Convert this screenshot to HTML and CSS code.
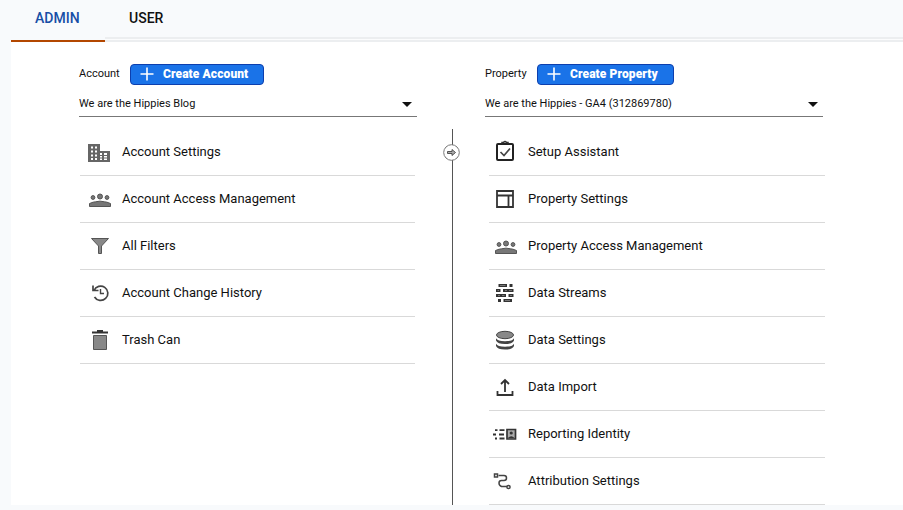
FILE: index.html
```
<!DOCTYPE html>
<html lang="en">
<head>
    <meta charset="UTF-8">
    <meta name="viewport" content="width=device-width, initial-scale=1.0">
    <title>Admin</title>
    <link rel="stylesheet" href="styles.css">
</head>
<body>
    <nav class="tabs">
        <a class="tab active">ADMIN</a>
        <a class="tab">USER</a>
    </nav>

    <main class="panel">
        <section class="column account">
            <div class="column-head">
                <span class="label">Account</span>
                <button class="create"><svg width="14" height="14" viewBox="0 0 14 14"><path d="M7 .5v13M.5 7h13" stroke="#fff" stroke-width="1.6"/></svg><span>Create Account</span></button>
            </div>
            <div class="select"><span>We are the Hippies Blog</span><i class="caret"></i></div>
            <ul class="menu">
                <li>
                    <svg class="icon" viewBox="0 0 24 24"><path d="M0 4h12v7h10v11H0z" fill="#666"/><path d="M3 6.500h2v2H3zM7 6.500h2v2H7zM3 10.500h2v2H3zM7 10.500h2v2H7zM3 14.500h2v2H3zM7 14.500h2v2H7zM3 18h2v2H3zM7 18h2v2H7zM12 13h2v2h-2zM16 13h3v2h-3zM12 16h2v1.500h-2zM16 16h3v1.500h-3zM12 18.500h2V20h-2zM16 18.500h3V20h-3z" fill="#fff"/></svg>
                    <span>Account Settings</span>
                </li>
                <li>
                    <svg class="icon" viewBox="0 0 24 24"><g fill="#777" stroke="#555"><circle cx="5" cy="10.500" r="1.900"/><circle cx="12" cy="9.500" r="2.500"/><circle cx="19" cy="10.500" r="1.900"/><path d="M1.500 19.500v-3q4-1.700 6-1.700 4.500-1.300 9 0 2 0 6 1.700v3z"/></g></svg>
                    <span>Account Access Management</span>
                </li>
                <li>
                    <svg class="icon" viewBox="0 0 24 24"><path d="M3.500 4.500h17L13.500 12v7.500h-3V12z" fill="#888" stroke="#555"/></svg>
                    <span>All Filters</span>
                </li>
                <li>
                    <svg class="icon" viewBox="0 0 24 24"><g fill="none" stroke="#444" stroke-width="1.700"><path d="M6 9.500a7.200 7.200 0 1 1 .5 6.500M5 4.500v5h5.500"/><path d="M12.500 8v4.500H16" stroke-width="1.400"/></g></svg>
                    <span>Account Change History</span>
                </li>
                <li>
                    <svg class="icon" viewBox="0 0 24 24"><path d="M5.500 7.500h13v14h-13z" fill="#888" stroke="#555"/><path d="M4 3.500h5V2h6v1.500h5v2H4z" fill="#333"/></svg>
                    <span>Trash Can</span>
                </li>
            </ul>
        </section>

        <div class="divider">
            <span class="move"><svg width="17" height="17" viewBox="0 0 17 17"><circle cx="8.500" cy="8.500" r="7.800" fill="#fff" stroke="#777"/><path d="M4.500 7.500H9v-2l3.500 3L9 11.500v-2H4.500z" fill="#aaa" stroke="#444" stroke-width=".9"/></svg></span>
        </div>

        <section class="column property">
            <div class="column-head">
                <span class="label">Property</span>
                <button class="create"><svg width="14" height="14" viewBox="0 0 14 14"><path d="M7 .5v13M.5 7h13" stroke="#fff" stroke-width="1.6"/></svg><span>Create Property</span></button>
            </div>
            <div class="select"><span>We are the Hippies - GA4 (312869780)</span><i class="caret"></i></div>
            <ul class="menu">
                <li>
                    <svg class="icon" viewBox="0 0 24 24"><rect x="4" y="4" width="16" height="16" rx="1" fill="none" stroke="#222" stroke-width="2"/><path d="M9 3.500V2.500h1.500q1.500-2 3 0H15v1" fill="none" stroke="#333" stroke-width="1.500"/><path d="M7.500 12l3.500 3.500 6-7" fill="none" stroke="#444" stroke-width="1.700"/></svg>
                    <span>Setup Assistant</span>
                </li>
                <li>
                    <svg class="icon" viewBox="0 0 24 24"><path d="M4 4h16v16H4zM4 8.500h16M15.500 8.500V20" fill="none" stroke="#333" stroke-width="1.800"/></svg>
                    <span>Property Settings</span>
                </li>
                <li>
                    <svg class="icon shifted" viewBox="0 0 24 24"><g fill="#777" stroke="#555"><circle cx="5" cy="10.500" r="1.900"/><circle cx="12" cy="9.500" r="2.500"/><circle cx="19" cy="10.500" r="1.900"/><path d="M1.500 19.500v-3q4-1.700 6-1.700 4.500-1.300 9 0 2 0 6 1.700v3z"/></g></svg>
                    <span>Property Access Management</span>
                </li>
                <li>
                    <svg class="icon" viewBox="0 0 24 24"><path d="M5.500 4.500H14M16.500 4.500h3M3 9.500h4.500M10 9.500h10.500M3 14.500h10M15.500 14.500h5M5 19.500h3M10.500 19.500H19" stroke="#333" stroke-width="2.800"/><path d="M7 4.500h5.500M4.500 9.500h1.500M12 9.500h2M16 9.500h3M5 14.500h2M9 14.500h2.500M17 14.500h2M12 19.500h5" stroke="#888" stroke-width=".8"/></svg>
                    <span>Data Streams</span>
                </li>
                <li>
                    <svg class="icon" viewBox="0 0 24 24"><ellipse cx="12" cy="7" rx="8.500" ry="3.700" fill="#888" stroke="#444"/><path d="M3 10.200q1.500 3 9 3t9-3v2.300q-1.500 3.500-9 3.500t-9-3.500zM3 15.800q1.500 3 9 3t9-3v2.300q-1.500 3.500-9 3.500t-9-3.500z" fill="#444"/></svg>
                    <span>Data Settings</span>
                </li>
                <li>
                    <svg class="icon" viewBox="0 0 24 24"><path d="M4.500 16v4h15v-4M12 17V5.500M8 9l4-4 4 4" fill="none" stroke="#333" stroke-width="1.800"/></svg>
                    <span>Data Import</span>
                </li>
                <li>
                    <svg class="icon" viewBox="0 0 24 24"><path d="M2 8.200h2.500M6.500 8.200h5M0 12.500h3M6 12.500h5M2 16.500h2M6.500 16.500h5" stroke="#333" stroke-width="1.800"/><path d="M14 7.500h8.500v9.500H14z" fill="#aaa" stroke="#333" stroke-width="1.700"/><circle cx="18.200" cy="11" r="1.600" fill="#333"/><path d="M15 16q3.200-3.500 6.500 0z" fill="#333"/></svg>
                    <span>Reporting Identity</span>
                </li>
                <li>
                    <svg class="icon" viewBox="0 0 24 24"><g fill="none" stroke="#444" stroke-width="1.500"><rect x="1.500" y="5" width="3" height="3"/><path d="M5.500 6.500h5.500q2.500 0 2.500 2.500T11 11.500H8.500Q6 11.500 6 14t2.500 3.500H14"/><circle cx="15.500" cy="18" r="1.600"/></g></svg>
                    <span>Attribution Settings</span>
                </li>
            </ul>
        </section>
    </main>
</body>
</html>
```
FILE: styles.css
```
* { box-sizing: border-box; }
body { margin: 0; padding-left: 11px; height: 510px; overflow: hidden; background-color: #f8fafc; font-family: Roboto, Arial, sans-serif; color: #111; }

.tabs { display: flex; height: 42px; background: linear-gradient(#f8fafc 37px, #eceef0 37px, #eceef0 39px, #fbfcfd 39px, #fbfcfd 40px, #eceef0 40px); }
.tab { height: 42px; padding: 10px 24px 0; font-size: 14px; line-height: 16px; font-weight: 500; }
.tab.active { width: 94px; color: #174ea6; background-color: #f8fafc; border-bottom: 2px solid #b34700; }

.panel { display: flex; height: 463px; padding: 20px 0 0 68px; background-color: #fff; }
.column { width: 338px; }
.column-head { display: flex; align-items: center; height: 24px; }
.label { width: 51px; font-size: 11px; line-height: 20px; padding-bottom: 1px; }
.property .label { width: 52px; }
.create { display: flex; align-items: center; gap: 9px; width: 134px; height: 21px; padding: 0 0 0 9px; border: 1px solid #0d3fae; border-radius: 4px; background-color: #1a73e8; color: #fff; font: 900 12px/18px Roboto, Arial, sans-serif; white-space: nowrap; }
.create span { letter-spacing: .1px; }
.property .create { width: 137px; }

.select { display: flex; justify-content: space-between; align-items: center; height: 31px; padding: 4px 5px 0 0; border-bottom: 1px solid #777; font-size: 11px; }
.caret { border: 5px solid transparent; border-top-color: #111; border-bottom: 0; margin-top: 2px; }

.menu { width: 335px; margin: 12px 0 0 1px; padding: 0; list-style: none; }
.property .menu { width: 336px; margin-left: 4px; }
.menu li { display: flex; align-items: center; gap: 10px; height: 47px; padding: 0 0 1px 8px; border-bottom: 1px solid #d9d9d9; font-size: 13px; }
.property .menu li { padding-left: 4px; gap: 11px; }
.icon { width: 24px; height: 24px; flex: none; }
.icon.shifted { margin: 0 -1px 0 1px; }

.divider { width: 1px; height: 376px; margin: 67px 32px 0 35px; background-color: #555; }
.move { display: block; width: 17px; margin: 15px 0 0 -9px; }
.move svg { display: block; }
```
